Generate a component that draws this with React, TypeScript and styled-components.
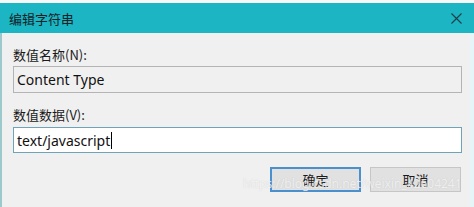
import React from "react";
import styled, { createGlobalStyle } from "styled-components";

const Global = createGlobalStyle`
  html, body { margin: 0; padding: 0; background: #f0f0f0; }
  * { box-sizing: border-box; }
`;

const FONT = `"Segoe UI", "Noto Sans", "Noto Sans CJK SC", sans-serif`;

const Frame = styled.div`
  width: 474px;
  height: 207px;
  display: flex;
  flex-direction: column;
  overflow: hidden;
  font-family: ${FONT};
  position: relative;
`;

const TopStrip = styled.div`
  height: 3px;
  background: #f7f9f9;
`;

const TitleBar = styled.div`
  height: 30px;
  background: #1bb5c4;
  display: flex;
  align-items: center;
  justify-content: space-between;
  padding: 0 12px 0 9px;
`;

const Title = styled.span`
  font-size: 13px;
  color: #152224;
  font-family: "Noto Sans CJK SC", sans-serif;
`;

const Body = styled.div`
  flex: 1;
  background: #f0f0f0;
  border-left: 2px solid #9cc9cc;
  border-right: 4px solid #e6f6f8;
  padding: 13px 8px 0 11px;
  display: flex;
  flex-direction: column;
`;

const Label = styled.div`
  font-size: 13px;
  line-height: 18px;
  height: 18px;
  color: #1a1a1a;
  font-family: "Noto Sans CJK SC", sans-serif;
`;

const Field = styled.div<{ $focused?: boolean }>`
  margin-top: ${(p) => (p.$focused ? "3px" : "2px")};
  height: ${(p) => (p.$focused ? "26px" : "27px")};
  border: 1px solid ${(p) => (p.$focused ? "#6fa3b8" : "#b4b4b4")};
  background: ${(p) => (p.$focused ? "#ffffff" : "#f0f0f0")};
  display: flex;
  align-items: center;
  padding-left: 3px;
  font-size: 14px;
  color: #111;
  font-family: ${FONT};
`;

const Caret = styled.span`
  display: inline-block;
  width: 1px;
  height: 17px;
  background: #000;
  margin-left: 1px;
`;

const Gap = styled.div<{ $h: number }>`
  height: ${(p) => p.$h}px;
`;

const Buttons = styled.div`
  margin-top: 14px;
  display: flex;
  justify-content: flex-end;
  gap: 9px;
  padding-right: 1px;
`;

const Button = styled.div<{ $primary?: boolean }>`
  width: 91px;
  height: 25px;
  background: #e1e1e1;
  border: ${(p) => (p.$primary ? "2px solid #4a90cf" : "1px solid #c6c6c6")};
  display: flex;
  align-items: center;
  justify-content: center;
  font-size: 13px;
  color: #1a1a1a;
  font-family: "Noto Sans CJK SC", sans-serif;
`;

const Watermark = styled.div`
  position: absolute;
  left: 243px;
  top: 175px;
  font-size: 12px;
  color: rgba(255, 255, 255, 0.7);
  text-shadow: 0 0 1px rgba(170, 170, 170, 0.5);
  font-family: "Noto Sans", sans-serif;
  white-space: nowrap;
  pointer-events: none;
`;

export default function App() {
  return (
    <>
      <Global />
      <Frame>
        <TopStrip />
        <TitleBar>
          <Title>编辑字符串</Title>
          <svg width="11" height="11" viewBox="0 0 11 11">
            <path d="M0.5 0.5 L10.5 10.5 M10.5 0.5 L0.5 10.5" stroke="#1d3f44" strokeWidth="1.1" />
          </svg>
        </TitleBar>
        <Body>
          <Label>数值名称(N):</Label>
          <Field>Content Type</Field>
          <Gap $h={13} />
          <Label>数值数据(V):</Label>
          <Field $focused>
            text/javascript
            <Caret />
          </Field>
          <Buttons>
            <Button $primary>确定</Button>
            <Button>取消</Button>
          </Buttons>
        </Body>
        <Watermark>https://blog.csdn.net/weixin_42604241</Watermark>
      </Frame>
    </>
  );
}
